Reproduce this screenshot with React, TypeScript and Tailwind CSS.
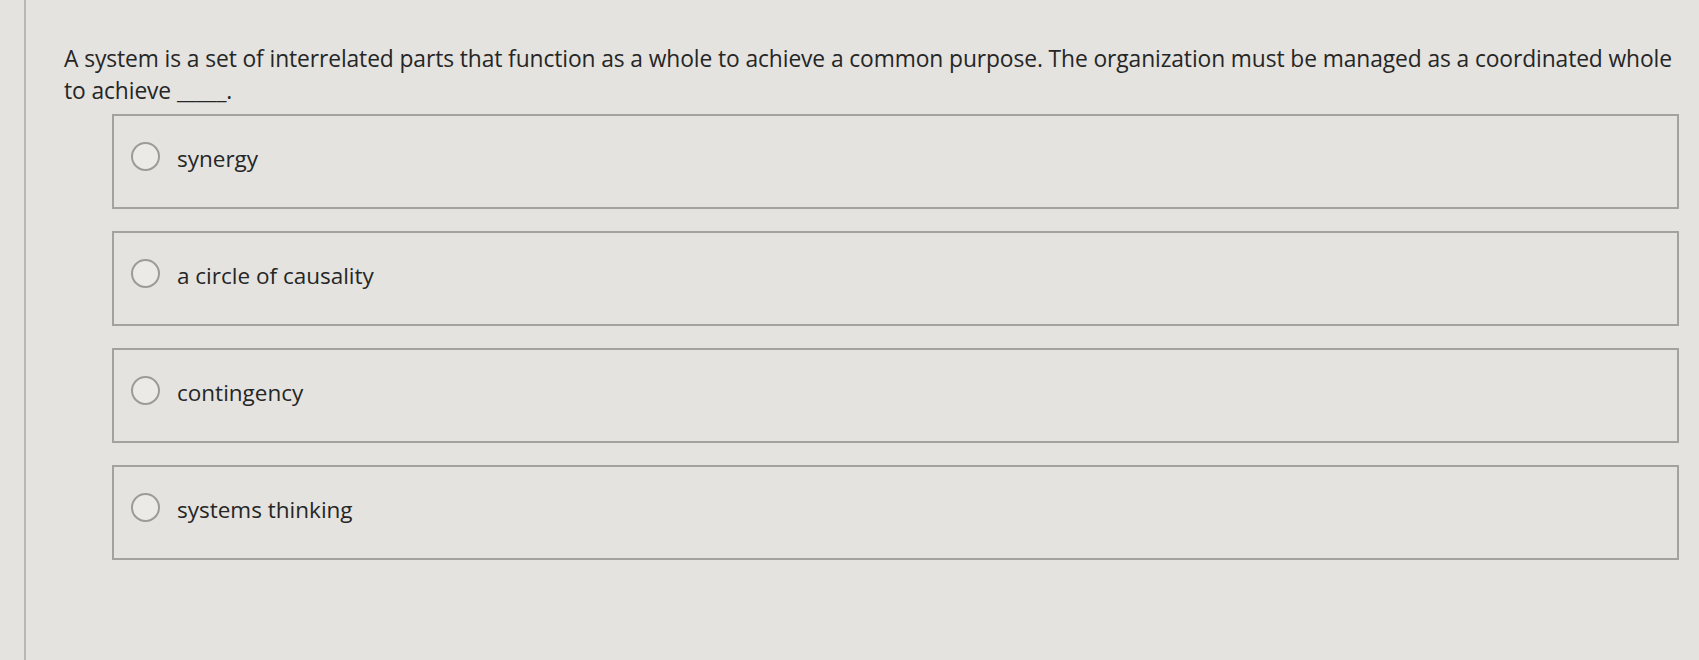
import React from 'react';

const options = ['synergy', 'a circle of causality', 'contingency', 'systems thinking'];

const App: React.FC = () => {
  return (
    <div className="w-full h-[660px] bg-[#e4e3e0] overflow-hidden font-['Open_Sans',sans-serif] text-[#262626]">
      <div className="ml-[24px] h-full border-l-2 border-[#b9b8b5] pl-[38px] pt-[43px] pr-[10px]">
        <p className="text-[22.8px] leading-[32px] tracking-[-0.1px]">
          A system is a set of interrelated parts that function as a whole to achieve a common purpose. The organization must be managed as a coordinated whole to achieve _____.
        </p>
        <div className="mt-[7px] ml-[48px] mr-[10px] flex flex-col gap-[22px]">
          {options.map((opt) => (
            <label key={opt} className="h-[95px] border-2 border-[#a3a29f] flex items-center pl-[17px] pb-[10px]">
              <span className="w-[29px] h-[29px] rounded-full border-2 border-[#9c9b98] bg-[#ebeae7] shrink-0"></span>
              <span className="ml-[17px] pt-[4px] text-[22.5px] leading-[30px]">{opt}</span>
            </label>
          ))}
        </div>
      </div>
    </div>
  );
};

export default App;
